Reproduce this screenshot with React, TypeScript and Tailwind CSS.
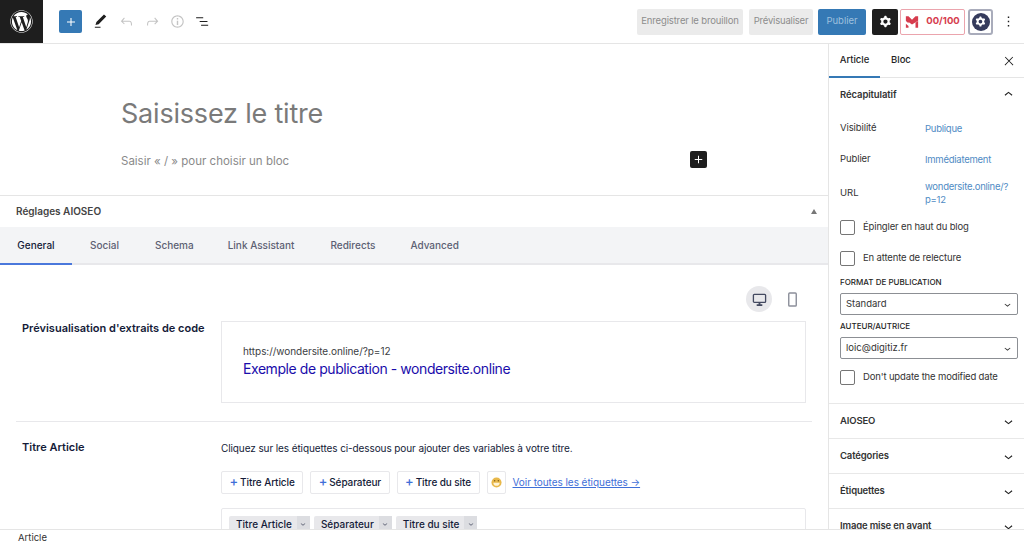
import { FaWordpress } from "react-icons/fa";

const font = { fontFamily: "Inter, 'Liberation Sans', sans-serif" };

const Wp = ({ d, className }: { d: string; className?: string }) => (
  <svg viewBox="0 0 24 24" fill="currentColor" fillRule="evenodd" className={className}>
    <path d={d} />
  </svg>
);

const PLUS = "M18 11.2h-5.2V6h-1.6v5.2H6v1.6h5.2V18h1.6v-5.2H18z";
const PEN = "M20.1 5.1L16.9 2 6.2 12.7l-1.3 4.4 4.5-1.3L20.1 5.1zM4 20.8h8v-1.5H4v1.5z";
const UNDO = "M18.3 11.7c-.6-.6-1.4-.9-2.3-.9H6.7l2.9-3.3-1.1-1-4.5 5L8.5 16l1-1-2.7-2.7H16c.5 0 .9.2 1.3.5 1 1 1 3.4 1 4.5v.3h1.5v-.2c0-1.5 0-4.3-1.5-5.7z";
const REDO = "M15.6 6.5l-1.1 1 2.9 3.3H8c-.9 0-1.7.3-2.3.9-1.4 1.5-1.4 4.2-1.4 5.6v.2h1.5v-.3c0-1.1 0-3.5 1-4.5.3-.3.7-.5 1.3-.5h9.2L14.5 15l1.1 1.1 4.6-4.6-4.6-5z";
const INFO = "M12 3.2c-4.8 0-8.8 3.9-8.8 8.8 0 4.8 3.9 8.8 8.8 8.8 4.8 0 8.8-3.9 8.8-8.8 0-4.8-4-8.8-8.8-8.8zm0 16c-4 0-7.2-3.3-7.2-7.2C4.8 8 8 4.8 12 4.8s7.2 3.3 7.2 7.2c0 4-3.2 7.2-7.2 7.2zM11 17h2v-6h-2v6zm0-8h2V7h-2v2z";
const LIST = "M3 6h10v1.5H3zM8 11.2h11v1.5H8zM10 16.5h10V18H10z";
const DOTS = "M13 19h-2v-2h2v2zm0-6h-2v-2h2v2zm0-6h-2V5h2v2z";
const COG = "M10.289 4.836A1 1 0 0111.275 4h1.306a1 1 0 01.987.836l.244 1.466c.787.26 1.503.679 2.108 1.218l1.393-.522a1 1 0 011.216.437l.653 1.13a1 1 0 01-.23 1.273l-1.148.944a6.025 6.025 0 010 2.435l1.149.946a1 1 0 01.23 1.272l-.653 1.13a1 1 0 01-1.216.437l-1.394-.522c-.605.54-1.32.958-2.108 1.218l-.244 1.466a1 1 0 01-.987.836h-1.306a1 1 0 01-.986-.836l-.244-1.466a5.995 5.995 0 01-2.108-1.218l-1.394.522a1 1 0 01-1.217-.436l-.653-1.131a1 1 0 01.23-1.272l1.149-.946a6.026 6.026 0 010-2.435l-1.148-.944a1 1 0 01-.23-1.272l.653-1.131a1 1 0 011.217-.437l1.393.522a5.994 5.994 0 012.108-1.218l.244-1.466zM14.929 12a3 3 0 11-6 0 3 3 0 016 0z";
const CLOSE = "M13 11.8l6.1-6.3-1-1-6.1 6.2-6.1-6.2-1 1 6.1 6.3-6.5 6.7 1 1 6.5-6.6 6.5 6.6 1-1z";
const CHEV_DOWN = "M17.5 11.6L12 16l-5.5-4.4.9-1.2L12 14l4.5-3.6 1 1.2z";
const CHEV_UP = "M6.5 12.4L12 8l5.5 4.4-.9 1.2L12 10l-4.5 3.6-1-1.2z";

const Header = () => (
  <header className="h-[44px] flex items-center border-b border-[#e5e5e5] shrink-0">
    <div className="w-[43px] h-[43px] bg-[#1e1e1e] flex items-center justify-center">
      <FaWordpress className="text-white w-[23px] h-[23px]" />
    </div>
    <button className="ml-[16px] w-[23px] h-[23px] bg-[#3579b5] rounded-[2px] flex items-center justify-center text-white">
      <Wp d={PLUS} className="w-[16px] h-[16px]" />
    </button>
    <Wp d={PEN} className="ml-[10px] w-[17px] h-[17px] text-[#1e1e1e]" />
    <Wp d={UNDO} className="ml-[9px] w-[17px] h-[17px] text-[#c4c4c4]" />
    <Wp d={REDO} className="ml-[9px] w-[17px] h-[17px] text-[#c4c4c4]" />
    <Wp d={INFO} className="ml-[8px] w-[17px] h-[17px] text-[#c4c4c4]" />
    <Wp d={LIST} className="ml-[8px] w-[17px] h-[17px] text-[#1e1e1e]" />

    <div className="ml-auto flex items-center">
      <button className="h-[26px] w-[106px] bg-[#ebebeb] rounded-[2px] text-[9.5px] tracking-[-0.15px] text-[#8d8d8d] whitespace-nowrap">Enregistrer le brouillon</button>
      <button className="ml-[6px] h-[26px] w-[64px] bg-[#ebebeb] rounded-[2px] text-[9.5px] tracking-[-0.2px] text-[#8d8d8d]">Prévisualiser</button>
      <button className="ml-[5px] h-[26px] w-[48px] bg-[#3579b5] rounded-[2px] text-[9.5px] text-[#9dc0de]">Publier</button>
      <button className="ml-[6px] h-[26px] w-[26px] bg-[#1e1e1e] rounded-[2px] flex items-center justify-center text-white">
        <Wp d={COG} className="w-[17px] h-[17px]" />
      </button>
      <button className="ml-[2px] h-[26px] w-[65px] border border-[#eba4ad] rounded-[2px] flex items-center justify-center gap-[7px] text-[9.5px] font-bold text-[#d63c4e]">
        <svg viewBox="0 0 16 14" className="w-[14px] h-[13px]" fill="#d63c4e">
          <path d="M1 1h3l4 4 4-4h3v5L8 10.5 4 7.5V9L1 6.5zM1 9.5l3 2.5V14H1zM12 8.5l3-2V14h-3z" />
        </svg>
        00/100
      </button>
      <button className="ml-[3px] h-[26px] w-[25px] border-2 border-[#a9acbb] rounded-[3px] flex items-center justify-center">
        <span className="w-[18px] h-[18px] rounded-full bg-[#353b5c] flex items-center justify-center text-white">
          <Wp d={COG} className="w-[15px] h-[15px]" />
        </span>
      </button>
      <Wp d={DOTS} className="ml-[7px] mr-[7px] w-[17px] h-[17px] text-[#1e1e1e]" />
    </div>
  </header>
);

const SeoTabs = () => (
  <div className="h-[38px] bg-[#f3f4f6] border-b-2 border-[#e8e8eb] flex text-[10px] font-medium text-[#5c6073]">
    <div className="w-[72px] -mb-[2px] border-b-2 border-[#4a78dc] flex items-center justify-center text-[#141b38]">General</div>
    {[
      ["Social", "ml-[18px]"],
      ["Schema", "ml-[36px]"],
      ["Link Assistant", "ml-[34px]"],
      ["Redirects", "ml-[36px]"],
      ["Advanced", "ml-[35px]"],
    ].map(([label, cls]) => (
      <div key={label} className={`${cls} flex items-center`}>{label}</div>
    ))}
  </div>
);

const TagButton = ({ label }: { label: string }) => (
  <button className="h-[23px] px-[7.5px] bg-white border border-[#e8e8eb] rounded-[2px] text-[10px] tracking-[-0.1px] font-medium text-[#141b38] whitespace-nowrap">
    <span className="text-[#3f6fd8] text-[13px] leading-none mr-[2px]">+</span>
    {label}
  </button>
);

const TagChip = ({ label }: { label: string }) => (
  <span className="h-[16px] bg-[#e8e8eb] rounded-[2px] flex items-center pl-[7px] text-[10px] font-medium text-[#141b38] whitespace-nowrap">
    {label}
    <span className="ml-[5px] w-[13px] h-[16px] bg-[#dcdde1] flex items-center justify-center">
      <Wp d={CHEV_DOWN} className="w-[10px] h-[10px] text-[#5c6073]" />
    </span>
  </span>
);

const Editor = () => (
  <main className="flex-1 min-w-0 overflow-hidden">
    <div className="h-[151px] pl-[121px] relative">
      <h1 className="pt-[52px] text-[27px] tracking-[-0.2px] leading-[36px] text-[#7a7a7a] font-normal">Saisissez le titre</h1>
      <p className="mt-[21px] text-[11.5px] leading-[16px] text-[#8a8a8a]">Saisir « / » pour choisir un bloc</p>
      <span className="absolute left-[690px] top-[107px] w-[17px] h-[17px] bg-[#1e1e1e] rounded-[2px] flex items-center justify-center text-white">
        <Wp d={PLUS} className="w-[15px] h-[15px]" />
      </span>
    </div>

    <section className="border-t border-[#e5e5e5]">
      <div className="h-[31px] px-[16px] flex items-center justify-between">
        <span className="text-[10px] font-semibold text-[#444]">Réglages AIOSEO</span>
        <span className="mr-[-5px] w-0 h-0 border-x-[3.5px] border-x-transparent border-b-[5px] border-b-[#777]" />
      </div>
      <SeoTabs />

      <div className="px-[16px]">
        <div className="h-[56px] flex items-center justify-end pr-[12px] pt-[12px]">
          <span className="w-[26px] h-[26px] rounded-full bg-[#e8e8eb] flex items-center justify-center">
            <svg viewBox="0 0 16 16" className="w-[15px] h-[15px]" fill="none" stroke="#434960" strokeWidth="1.4">
              <rect x="1.5" y="2.5" width="13" height="8.5" rx="1" />
              <path d="M5 14h6M8 11v3" strokeWidth="2" />
            </svg>
          </span>
          <svg viewBox="0 0 16 16" className="ml-[13px] w-[15px] h-[15px]" fill="none" stroke="#8c8f9a" strokeWidth="1.5">
            <rect x="4" y="1" width="8" height="14" rx="1" />
          </svg>
        </div>

        <div className="flex pb-[18px] border-b border-[#e8e8eb]">
          <h3 className="w-[205px] pl-[6px] text-[11px] leading-[14px] font-semibold text-[#141b38] whitespace-nowrap">Prévisualisation d'extraits de code</h3>
          <div className="w-[585px] h-[82px] border border-[#e8e8eb] pl-[21px] pt-[22px]">
            <div className="text-[10px] tracking-[-0.05px] leading-[14px] text-[#3c4043]">https://wondersite.online/?p=12</div>
            <div className="mt-[1px] text-[14px] tracking-[-0.43px] leading-[20px] text-[#1a0dab]">Exemple de publication - wondersite.online</div>
          </div>
        </div>

        <div className="flex pt-[19px]">
          <h3 className="w-[205px] pl-[6px] -mt-[1px] text-[11px] leading-[14px] font-semibold text-[#141b38]">Titre Article</h3>
          <div className="w-[585px]">
            <p className="text-[10px] tracking-[-0.1px] leading-[14px] text-[#141b38]">Cliquez sur les étiquettes ci-dessous pour ajouter des variables à votre titre.</p>
            <div className="mt-[16px] flex items-center gap-[7px]">
              <TagButton label="Titre Article" />
              <TagButton label="Séparateur" />
              <TagButton label="Titre du site" />
              <span className="w-[19px] h-[23px] border border-[#e8e8eb] rounded-[2px] flex items-center justify-center">
                <svg viewBox="0 0 12 12" className="w-[11px] h-[11px]">
                  <circle cx="6" cy="6" r="5.5" fill="#e8b84a" />
                  <path d="M2.5 6.2h7C9.3 8.6 7.8 9.6 6 9.6S2.7 8.6 2.5 6.2z" fill="#fff3d6" />
                  <circle cx="4" cy="4" r=".8" fill="#7a5a20" />
                  <circle cx="8" cy="4" r=".8" fill="#7a5a20" />
                </svg>
              </span>
              <a className="text-[10px] tracking-[-0.05px] text-[#3f6fd8] underline whitespace-nowrap">Voir toutes les étiquettes →</a>
            </div>
            <div className="mt-[14px] h-[40px] border border-[#e8e8eb] rounded-[2px] pl-[7px] pt-[7px] flex items-start gap-[4px]">
              <TagChip label="Titre Article" />
              <TagChip label="Séparateur" />
              <TagChip label="Titre du site" />
            </div>
          </div>
        </div>
      </div>
    </section>
  </main>
);

const Row = ({ label, value }: { label: string; value: string }) => (
  <div className="flex items-center h-[31px]">
    <span className="w-[85px] text-[9.5px] tracking-[-0.1px] text-[#333]">{label}</span>
    <span className="flex-1 text-[9.5px] tracking-[-0.25px] leading-[13px] text-[#4f8bc4]">{value}</span>
  </div>
);

const Check = ({ label, className }: { label: string; className?: string }) => (
  <label className={`flex items-center gap-[8px] ${className ?? ""}`}>
    <span className="w-[15px] h-[15px] border border-[#757575] rounded-[2px] bg-white shrink-0" />
    <span className="text-[9.5px] tracking-[-0.15px] text-[#333] whitespace-nowrap">{label}</span>
  </label>
);

const SelectBox = ({ value }: { value: string }) => (
  <div className="mt-[5px] h-[22px] w-[178px] border border-[#8c8f94] rounded-[2px] flex items-center justify-between pl-[5px] pr-[3px] text-[9.5px] text-[#333]">
    {value}
    <Wp d={CHEV_DOWN} className="w-[13px] h-[13px] text-[#333]" />
  </div>
);

const Panel = ({ label }: { label: string }) => (
  <div className="h-[35px] shrink-0 border-t border-[#e8e8e8] flex items-center justify-between pl-[11px] pr-[7px]">
    <span className="text-[9.5px] tracking-[-0.15px] font-semibold text-[#333] whitespace-nowrap">{label}</span>
    <Wp d={CHEV_DOWN} className="w-[17px] h-[17px] text-[#1e1e1e]" />
  </div>
);

const Sidebar = () => (
  <aside className="w-[196px] shrink-0 border-l border-[#e5e5e5] overflow-hidden flex flex-col">
    <div className="h-[34px] shrink-0 border-b border-[#e5e5e5] flex items-center text-[9.5px] font-medium text-[#1e1e1e]">
      <span className="w-[51px] h-[34px] -mb-[1px] border-b-2 border-[#3579b5] flex items-center justify-center">Article</span>
      <span className="ml-[11px]">Bloc</span>
      <Wp d={CLOSE} className="ml-auto mr-[8px] w-[14px] h-[14px]" />
    </div>
    <div className="h-[325px] shrink-0 pl-[11px] pr-[5px]">
      <div className="h-[35px] flex items-center justify-between pr-[2px]">
        <span className="-mt-[1px] text-[9.5px] tracking-[-0.1px] font-semibold text-[#333]">Récapitulatif</span>
        <Wp d={CHEV_UP} className="-mt-[2px] w-[17px] h-[17px] text-[#1e1e1e]" />
      </div>
      <Row label="Visibilité" value="Publique" />
      <Row label="Publier" value="Immédiatement" />
      <div className="h-[35px] pt-[1px] flex items-center">
        <span className="w-[85px] text-[9.5px] text-[#333]">URL</span>
        <span className="w-[88px] text-[9.5px] tracking-[-0.25px] leading-[13px] text-[#4f8bc4]">
          wondersite.online/?
          <br />
          p=12
        </span>
      </div>
      <Check label="Épingler en haut du blog" className="mt-[10px]" />
      <Check label="En attente de relecture" className="mt-[16px]" />
      <div className="mt-[10px] text-[8px] leading-[12px] font-medium text-[#1e1e1e]">FORMAT DE PUBLICATION</div>
      <SelectBox value="Standard" />
      <div className="mt-[5px] text-[8px] leading-[12px] font-medium text-[#1e1e1e]">AUTEUR/AUTRICE</div>
      <SelectBox value="loic@digitiz.fr" />
      <Check label="Don't update the modified date" className="mt-[11px]" />
    </div>
    <Panel label="AIOSEO" />
    <Panel label="Catégories" />
    <Panel label="Étiquettes" />
    <Panel label="Image mise en avant" />
  </aside>
);

export default function App() {
  return (
    <div className="w-[1024px] h-[546px] bg-white flex flex-col overflow-hidden" style={font}>
      <Header />
      <div className="flex-1 min-h-0 flex">
        <Editor />
        <Sidebar />
      </div>
      <footer className="h-[17px] shrink-0 border-t border-[#e5e5e5] bg-white flex items-center pl-[18px] text-[9.5px] text-[#333]">
        Article
      </footer>
    </div>
  );
}
